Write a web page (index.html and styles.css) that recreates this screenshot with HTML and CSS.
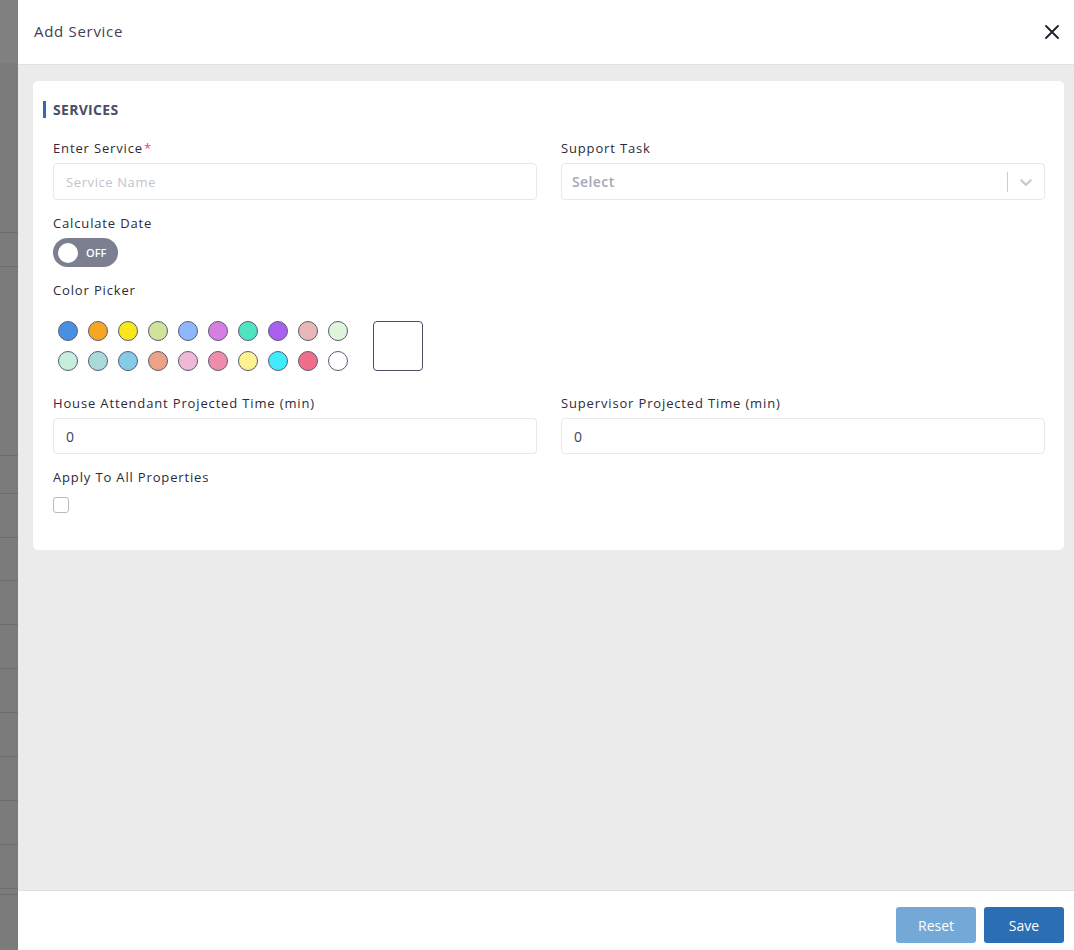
FILE: index.html
```html
<!DOCTYPE html>
<html lang="en">
<head>
  <meta charset="UTF-8" />
  <title>Add Service</title>
  <link rel="stylesheet" href="styles.css">
</head>
<body>

  <!-- faded page behind the drawer -->
  <div class="backdrop">
    <div class="bd-top"></div>
    <div class="bd-row" style="height:170px"></div>
    <div class="bd-row" style="height:34px"></div>
    <div class="bd-row" style="height:189px"></div>
    <div class="bd-row" style="height:38px"></div>
    <div class="bd-row" style="height:44px"></div>
    <div class="bd-row" style="height:43px"></div>
    <div class="bd-row" style="height:44px"></div>
    <div class="bd-row" style="height:44px"></div>
    <div class="bd-row" style="height:44px"></div>
    <div class="bd-row" style="height:44px"></div>
    <div class="bd-row" style="height:44px"></div>
    <div class="bd-row" style="height:44px"></div>
    <div class="bd-row" style="height:44px"></div>
    <div class="bd-row" style="height:6px"></div>
  </div>

  <div class="drawer">
    <div class="drawer-header">
      <h2>Add Service</h2>
      <button class="close-btn" aria-label="Close">
        <svg width="14" height="14" viewBox="0 0 14 14"><path d="M1 1L13 13M13 1L1 13" stroke="#1e1e2d" stroke-width="1.8" stroke-linecap="round"/></svg>
      </button>
    </div>

    <div class="drawer-body">
      <div class="card">
        <div class="section-title">SERVICES</div>

        <div class="row">
          <div class="field">
            <label>Enter Service<span class="req">*</span></label>
            <input type="text" class="input" placeholder="Service Name" />
          </div>
          <div class="field">
            <label>Support Task</label>
            <div class="select">
              <span class="select-ph">Select</span>
              <span class="sep"></span>
              <span class="chevron">
                <svg width="20" height="20" viewBox="0 0 20 20"><path fill="#ccc" d="M4.516 7.548c0.436-0.446 1.043-0.481 1.576 0l3.908 3.747 3.908-3.747c0.533-0.481 1.141-0.446 1.574 0 0.436 0.445 0.408 1.197 0 1.615-0.406 0.418-4.695 4.502-4.695 4.502-0.217 0.223-0.502 0.335-0.787 0.335s-0.57-0.112-0.789-0.335c0 0-4.287-4.084-4.695-4.502s-0.436-1.170 0-1.615z"/></svg>
              </span>
            </div>
          </div>
        </div>

        <div class="field">
          <label>Calculate Date</label>
          <div class="toggle"><span class="knob"></span><span class="toggle-text">OFF</span></div>
        </div>

        <div class="field">
          <label>Color Picker</label>
          <div class="picker">
            <div class="swatches">
              <span class="dot" style="background:#4a90e2"></span>
              <span class="dot" style="background:#f5a623"></span>
              <span class="dot" style="background:#f8e71c"></span>
              <span class="dot" style="background:#d0e39a"></span>
              <span class="dot" style="background:#8fb8fc"></span>
              <span class="dot" style="background:#d57fe3"></span>
              <span class="dot" style="background:#50e3c2"></span>
              <span class="dot" style="background:#a960f0"></span>
              <span class="dot" style="background:#e8b8b8"></span>
              <span class="dot" style="background:#e0f5dc"></span>
              <span class="dot" style="background:#c6eedc"></span>
              <span class="dot" style="background:#a8dadc"></span>
              <span class="dot" style="background:#86cbe8"></span>
              <span class="dot" style="background:#eba287"></span>
              <span class="dot" style="background:#f0b8d6"></span>
              <span class="dot" style="background:#ee8eab"></span>
              <span class="dot" style="background:#fff391"></span>
              <span class="dot" style="background:#42ebfb"></span>
              <span class="dot" style="background:#f06e8a"></span>
              <span class="dot" style="background:#ffffff"></span>
            </div>
            <div class="preview"></div>
          </div>
        </div>

        <div class="row">
          <div class="field">
            <label>House Attendant Projected Time (min)</label>
            <input type="text" class="input input-sm" value="0" />
          </div>
          <div class="field">
            <label>Supervisor Projected Time (min)</label>
            <input type="text" class="input input-sm" value="0" />
          </div>
        </div>

        <div class="field last">
          <label>Apply To All Properties</label>
          <span class="checkbox"></span>
        </div>
      </div>
    </div>

    <div class="drawer-footer">
      <button class="btn btn-reset">Reset</button>
      <button class="btn btn-save">Save</button>
    </div>
  </div>

</body>
</html>
```

FILE: styles.css
```css
* {
  box-sizing: border-box;
}
body {
  margin: 0;
  height: 950px;
  overflow: hidden;
  display: flex;
  font-family: 'Open Sans', sans-serif;
  color: #2c2c3c;
}

/* backdrop strip */
.backdrop {
  width: 18px;
  background: #7b7b7b;
}
.bd-top {
  height: 63px;
  background: #808080;
}
.bd-row {
  border-bottom: 1px solid #6c6c6c;
}

/* drawer */
.drawer {
  flex: 1;
  display: flex;
  flex-direction: column;
  background: #ebebeb;
}
.drawer-header {
  height: 65px;
  background: #fff;
  border-bottom: 1px solid #dfe0e6;
  display: flex;
  align-items: center;
  justify-content: space-between;
  padding: 0 15px 0 16px;
}
.drawer-header h2 {
  margin: 0 0 2px;
  font-size: 15px;
  font-weight: 500;
  letter-spacing: 0.7px;
  color: #3f4254;
}
.close-btn {
  background: none;
  border: none;
  padding: 0;
  cursor: pointer;
  display: flex;
}

.drawer-body {
  flex: 1;
  padding: 16px 10px 0 15px;
}
.card {
  background: #fff;
  border-radius: 5px;
  padding: 20px 19px 37px 20px;
}
.section-title {
  border-left: 3px solid #2d6db0;
  margin-left: -10px;
  padding-left: 7px;
  font-size: 14px;
  font-weight: 700;
  line-height: 17px;
  letter-spacing: 0.3px;
  color: #494d65;
  margin-bottom: 20px;
}

.row {
  display: grid;
  grid-template-columns: 1fr 1fr;
  gap: 24px;
}
.field {
  margin-bottom: 13px;
}
.field label {
  display: block;
  font-size: 13px;
  line-height: 20px;
  letter-spacing: 0.85px;
  color: #2b2b3b;
  margin-bottom: 5px;
}
.req {
  color: #f1416c;
  margin-left: 1px;
}
.input {
  width: 100%;
  height: 37px;
  border: 1px solid #e6e7ef;
  border-radius: 4px;
  padding: 0 12px;
  font-family: inherit;
  font-size: 14px;
  color: #3f4254;
  outline: none;
}
.input-sm {
  height: 36px;
}
.input::placeholder {
  color: #c2c3cf;
  font-size: 13px;
  letter-spacing: 0.6px;
}

.select {
  height: 37px;
  border: 1px solid #e6e7ef;
  border-radius: 4px;
  display: flex;
  align-items: center;
  padding-left: 10px;
}
.select-ph {
  flex: 1;
  font-size: 14px;
  font-weight: 600;
  letter-spacing: 0.4px;
  color: #a6a6b8;
}
.sep {
  width: 1px;
  height: 20px;
  background: #ccc;
}
.chevron {
  width: 36px;
  display: flex;
  justify-content: center;
}

.toggle {
  width: 65px;
  height: 29px;
  border-radius: 15px;
  background: #7b7f8f;
  display: flex;
  align-items: center;
  padding-left: 5px;
}
.knob {
  width: 20px;
  height: 20px;
  border-radius: 50%;
  background: #fff;
}
.toggle-text {
  color: #fff;
  font-size: 11px;
  font-weight: 600;
  margin-left: 8px;
}

.picker {
  display: flex;
  align-items: center;
  padding: 16px 0 0 5px;
  margin-bottom: 22px;
}
.swatches {
  display: grid;
  grid-template-columns: repeat(10, 20px);
  gap: 10px;
}
.dot {
  width: 20px;
  height: 20px;
  border-radius: 50%;
  border: 1px solid #5a5d73;
}
.preview {
  width: 50px;
  height: 50px;
  margin-left: 25px;
  border: 1px solid #4a4e69;
  border-radius: 4px;
}

.field.last {
  margin-bottom: 0;
}
.checkbox {
  display: block;
  width: 16px;
  height: 16px;
  margin-top: 10px;
  border: 1px solid #b9b9c0;
  border-radius: 3px;
}

.drawer-footer {
  height: 60px;
  background: #fff;
  border-top: 1px solid #dfe0e6;
  display: flex;
  justify-content: flex-end;
  gap: 8px;
  padding: 16px 10px 0 0;
}
.btn {
  width: 80px;
  height: 36px;
  border: none;
  border-radius: 3px;
  color: #fff;
  font-family: inherit;
  font-size: 14px;
  font-weight: 500;
  cursor: pointer;
}
.btn-reset {
  background: #74a9d7;
}
.btn-save {
  background: #2b6eb3;
}
```
